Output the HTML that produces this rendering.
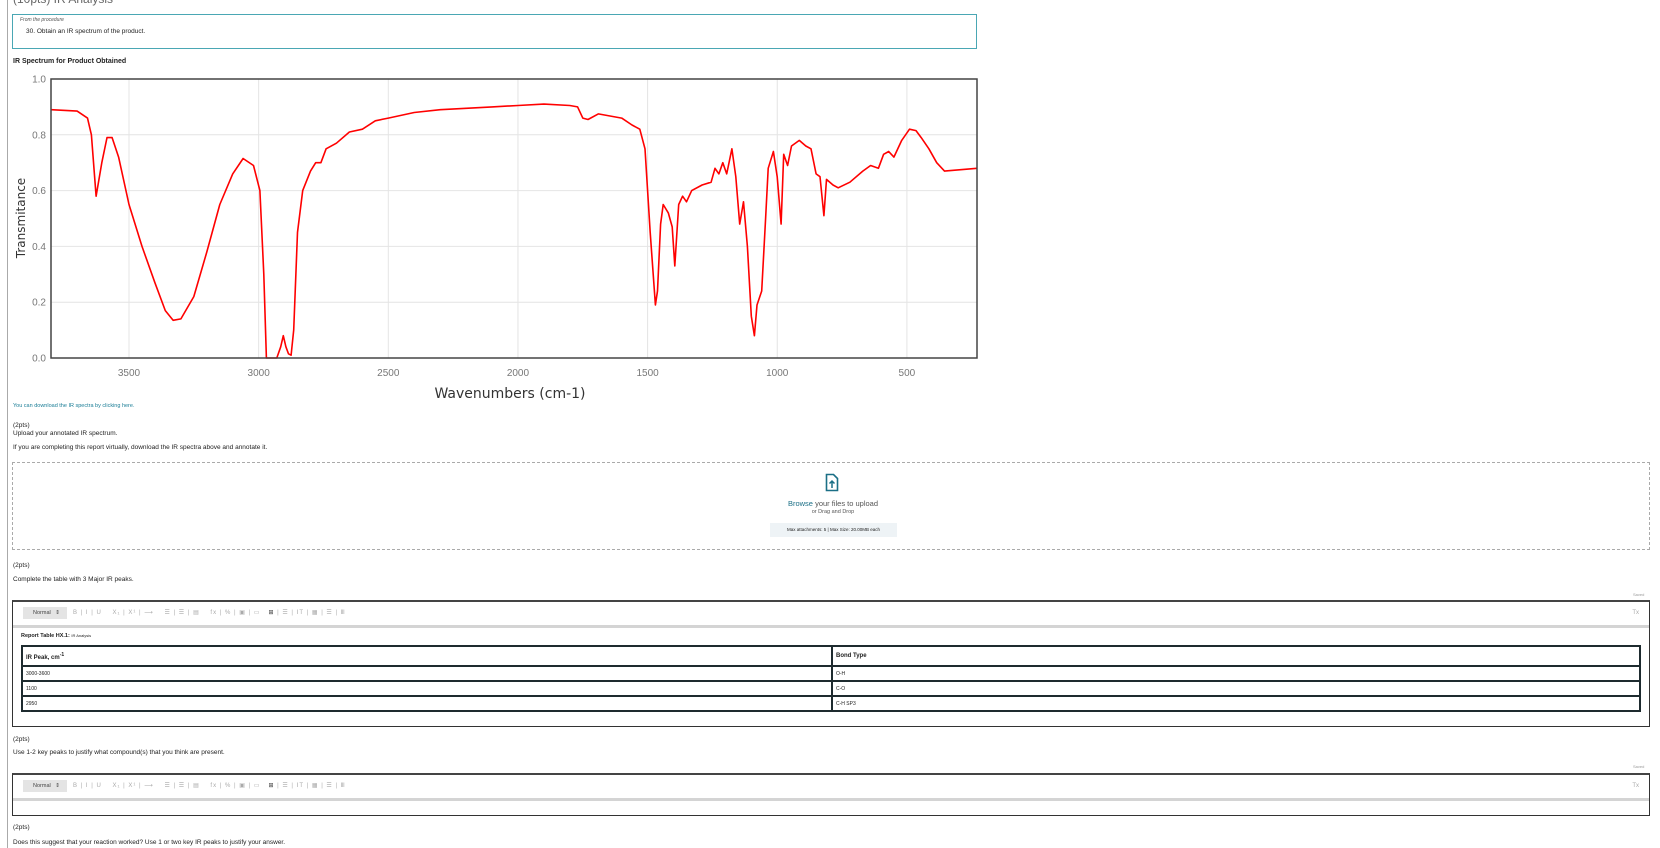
<!DOCTYPE html>
<html><head><meta charset="utf-8"><style>
*{margin:0;padding:0;box-sizing:border-box}
body{width:1660px;height:848px;overflow:hidden;background:#fff;font-family:"Liberation Sans",sans-serif;color:#222;position:relative}
.a{position:absolute;white-space:nowrap}
.t{font-size:6.5px}
.ed{position:absolute;left:12px;width:1638px;border:1px solid #333;border-top:2px solid #444}
.tb{height:26px;border-bottom:3px solid #d4d4d4;position:relative;font-size:6px;color:#aaa}
.tb .n{position:absolute;left:10px;top:5px;width:44px;height:12px;background:#e4e4e4;color:#444;font-size:5.5px;padding:3px 0 0 10px;white-space:nowrap}
.tb .i{position:absolute;left:60px;top:7px;letter-spacing:1px;white-space:nowrap}
table{border-collapse:collapse;position:absolute;left:8px;top:43px;width:1620px}
td{border:2px solid #1e2b2f;font-size:5px;padding:0 3px;height:15px}
</style></head><body>
<div class="a" style="left:7px;top:0;width:1px;height:848px;background:#aaa"></div>
<div class="a" style="left:13px;top:-8px;font-size:12px;color:#666">(10pts) IR Analysis</div>
<div class="a" style="left:12px;top:14px;width:965px;height:35px;border:1px solid #4aa7b4"></div>
<div class="a" style="left:20px;top:17px;font-size:5px;font-style:italic;color:#555">From the procedure</div>
<div class="a t" style="left:26px;top:28px">30. Obtain an IR spectrum of the product.</div>
<div class="a" style="left:13px;top:58px;font-size:7px;font-weight:bold">IR Spectrum for Product Obtained</div>
<svg class="a" style="left:0;top:0" width="1000" height="400" id="ch"></svg>
<div class="a" style="left:13px;top:403px;font-size:5.5px;color:#1a7d96">You can download the IR spectra by clicking here.</div>
<div class="a t" style="left:13px;top:422px">(2pts)</div>
<div class="a t" style="left:13px;top:430px">Upload your annotated IR spectrum.</div>
<div class="a t" style="left:13px;top:444px">If you are completing this report virtually, download the IR spectra above and annotate it.</div>
<div class="a" style="left:12px;top:462px;width:1638px;height:88px;border:1px dashed #aaa"></div>
<svg class="a" style="left:825px;top:473px" width="14" height="19" viewBox="0 0 14 19"><path d="M1.5 1.5h7l4 4v12h-11z" fill="none" stroke="#1b6f86" stroke-width="1.6"/><path d="M7 15V8M4.5 10.5L7 8l2.5 2.5" fill="none" stroke="#1b6f86" stroke-width="1.5"/></svg>
<div class="a" style="left:733px;top:499px;width:200px;text-align:center;font-size:7.5px;color:#1b6f86">Browse <span style="color:#555">your files to upload</span></div>
<div class="a" style="left:733px;top:509px;width:200px;text-align:center;font-size:5.5px;color:#555">or Drag and Drop</div>
<div class="a" style="left:770px;top:523px;width:127px;height:14px;background:#eef3f6;font-size:4.5px;text-align:center;padding-top:4px">Max attachments: 5 | Max Size: 20.00MB each</div>
<div class="a t" style="left:13px;top:562px">(2pts)</div>
<div class="a t" style="left:13px;top:576px">Complete the table with 3 Major IR peaks.</div>
<div class="a" style="left:1633px;top:592px;font-size:4px;color:#999">Saved</div>
<div class="ed" style="top:600px;height:127px">
<div class="tb"><div class="n">Normal &nbsp;&nbsp;⇕</div><div class="i">B | I | U &nbsp;&nbsp; X₁ | X¹ | ⟶ &nbsp;&nbsp; ☰ | ☰ | ▤ &nbsp;&nbsp; fx | % | ▣ | ▭ &nbsp;&nbsp;<span style="color:#333">⊞</span> | ☰ | ⅠT | ▦ | ☰ | Ⅲ</div><div class="a" style="right:10px;top:8px">Tx</div></div>
<div class="a" style="left:8px;top:31px;font-size:5.5px;font-weight:bold">Report Table HX.1: <span style="font-weight:normal;font-size:4px">IR Analysis</span></div>
<table><tr><td style="height:20px;width:810px;font-size:6px;font-weight:bold">IR Peak, cm<sup>-1</sup></td><td style="font-size:6px;font-weight:bold">Bond Type</td></tr>
<tr><td>3000-3600</td><td>O-H</td></tr><tr><td>1100</td><td>C-O</td></tr><tr><td>2950</td><td>C-H SP3</td></tr></table>
</div>
<div class="a t" style="left:13px;top:736px">(2pts)</div>
<div class="a t" style="left:13px;top:749px">Use 1-2 key peaks to justify what compound(s) that you think are present.</div>
<div class="a" style="left:1633px;top:764px;font-size:4px;color:#999">Saved</div>
<div class="ed" style="top:773px;height:43px">
<div class="tb"><div class="n">Normal &nbsp;&nbsp;⇕</div><div class="i">B | I | U &nbsp;&nbsp; X₁ | X¹ | ⟶ &nbsp;&nbsp; ☰ | ☰ | ▤ &nbsp;&nbsp; fx | % | ▣ | ▭ &nbsp;&nbsp;<span style="color:#333">⊞</span> | ☰ | ⅠT | ▦ | ☰ | Ⅲ</div><div class="a" style="right:10px;top:8px">Tx</div></div>
</div>
<div class="a t" style="left:13px;top:824px">(2pts)</div>
<div class="a t" style="left:13px;top:839px">Does this suggest that your reaction worked? Use 1 or two key IR peaks to justify your answer.</div>
<script>
var X=function(w){return 129+(3500-w)*0.2593},Y=function(t){return 358-t*279};
var s='';
for(var v=0;v<=1.001;v+=0.2){var y=Y(v);s+='<line x1="51" x2="977" y1="'+y+'" y2="'+y+'" stroke="#e4e4e4"/>';s+='<text x="46" y="'+(y+3.5)+'" text-anchor="end" font-size="10" fill="#777" font-family="Liberation Sans">'+v.toFixed(1)+'</text>';}
for(var w=3500;w>=500;w-=500){var x=X(w);s+='<line x1="'+x+'" x2="'+x+'" y1="79" y2="358" stroke="#e4e4e4"/>';s+='<text x="'+x+'" y="376" text-anchor="middle" font-size="10" fill="#777" font-family="Liberation Sans">'+w+'</text>';}
var p=[3800,.89,3700,.885,3660,.86,3645,.8,3627,.58,3605,.7,3585,.79,3565,.79,3540,.72,3500,.55,3450,.4,3400,.27,3360,.17,3330,.135,3300,.14,3250,.22,3200,.38,3150,.55,3100,.66,3060,.715,3020,.69,2995,.6,2980,.3,2970,0,2930,0,2915,.04,2905,.08,2895,.04,2885,.015,2875,.01,2865,.1,2850,.45,2830,.6,2800,.67,2780,.7,2760,.7,2740,.75,2700,.77,2650,.81,2600,.82,2550,.85,2500,.86,2400,.88,2300,.89,2200,.895,2100,.9,2000,.905,1900,.91,1800,.905,1770,.9,1750,.86,1730,.855,1690,.875,1600,.86,1560,.835,1530,.82,1510,.75,1490,.45,1470,.19,1462,.24,1450,.48,1440,.55,1420,.52,1405,.47,1395,.33,1380,.55,1365,.58,1350,.56,1330,.6,1290,.62,1255,.63,1240,.68,1225,.66,1210,.7,1195,.66,1175,.75,1160,.65,1145,.48,1130,.56,1115,.4,1100,.15,1088,.08,1078,.19,1060,.24,1045,.5,1035,.68,1015,.74,1000,.65,985,.48,975,.73,960,.69,945,.76,915,.78,890,.76,870,.75,850,.66,835,.65,820,.51,810,.64,785,.62,765,.61,720,.63,670,.67,640,.69,610,.68,590,.73,570,.74,550,.72,520,.78,490,.82,465,.815,445,.79,415,.75,385,.7,355,.67,230,.68];
var d='';for(var i=0;i<p.length;i+=2)d+=(i?'L':'M')+X(p[i]).toFixed(1)+' '+Y(p[i+1]).toFixed(1);
s+='<path d="'+d+'" fill="none" stroke="#f00" stroke-width="1.6" stroke-linejoin="round"/>';
s+='<rect x="51" y="79" width="926" height="279" fill="none" stroke="#444" stroke-width="1.5"/>';
s+='<text x="510" y="398" text-anchor="middle" font-size="14" fill="#333" font-family="DejaVu Sans">Wavenumbers (cm-1)</text>';
s+='<text transform="translate(25,218) rotate(-90)" text-anchor="middle" font-size="12" fill="#333" font-family="DejaVu Sans">Transmitance</text>';
document.getElementById('ch').innerHTML=s;
</script>
</body></html>
